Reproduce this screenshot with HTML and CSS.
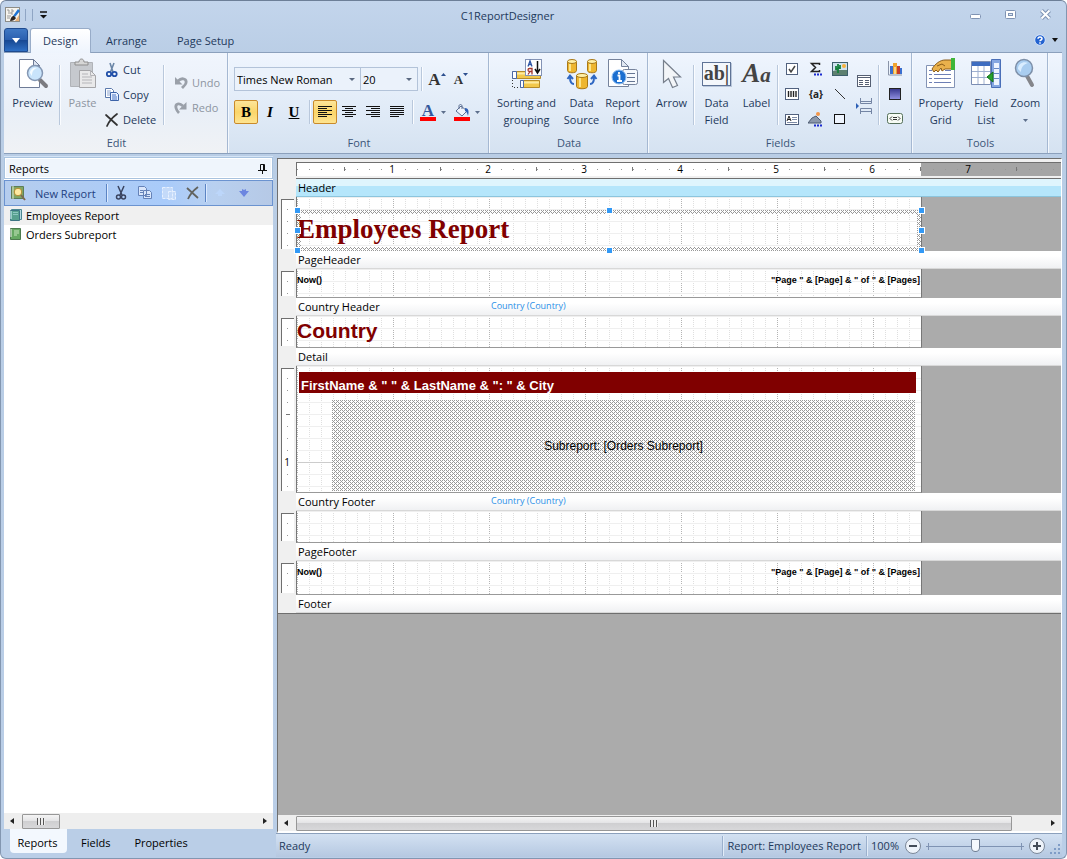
FILE: index.html
```html
<!DOCTYPE html>
<html lang="en">
<head>
  <meta charset="UTF-8" />
  <meta name="viewport" content="width=device-width, initial-scale=1.0" />
  <title>C1ReportDesigner</title>
  <link rel="stylesheet" href="styles.css">
</head>
<body>
<div class="window">
  <header class="titlebar">
    <div class="quick">
      <svg width="16" height="16" viewBox="0 0 16 16"><rect x="0.5" y="0.5" width="14" height="14" fill="#f6f4ee" stroke="#8d8d88"/><path d="M2 3h2v4M6 3h2v2H6v2h2M2 9h4M2 11h3" fill="none" stroke="#999"/><path d="M8 9l5-7 2 2-5 6z" fill="#1f74d4"/><path d="M5 14c1-4 2-5 4-5l2 2c-1 2-3 3-6 3z" fill="#2b2420"/><path d="M10 14l4-6v6z" fill="#e8b27a"/></svg>
      <i class="qsep"></i><i class="qsep"></i>
      <button class="plain" aria-label="Customize toolbar"><svg width="9" height="8" viewBox="0 0 9 8"><path d="M1 1h7" stroke="#111" stroke-width="1.4"/><path d="M1 4h7L4.500 7.500z" fill="#111"/></svg></button>
    </div>
    <h1>C1ReportDesigner</h1>
    <div class="winbtns">
      <button class="plain" aria-label="Minimize"><svg width="12" height="12" viewBox="0 0 12 12"><rect x="0.5" y="5.500" width="10" height="4" rx="1" fill="#fff" stroke="#7f93b3"/></svg></button>
      <button class="plain" aria-label="Maximize"><svg width="12" height="12" viewBox="0 0 12 12"><rect x="0.5" y="1.500" width="10" height="8" rx="1" fill="#fff" stroke="#7f93b3"/><rect x="3.500" y="4.500" width="4" height="2" fill="#dfe9f6" stroke="#7f93b3"/></svg></button>
      <button class="plain" aria-label="Close"><svg width="12" height="12" viewBox="0 0 12 12"><path d="M1.500 1.500l8 8M9.500 1.500l-8 8" stroke="#7f93b3" stroke-width="4"/><path d="M1.500 1.500l8 8M9.500 1.500l-8 8" stroke="#fff" stroke-width="2"/></svg></button>
    </div>
  </header>

  <nav class="tabs">
    <button class="appbtn" aria-label="Application menu"><svg width="8" height="5" viewBox="0 0 8 5"><path d="M0 0h8L4 5z" fill="#fff"/></svg></button>
    <button class="tab active">Design</button>
    <button class="tab">Arrange</button>
    <button class="tab">Page Setup</button>
    <button class="plain help" aria-label="Help"><svg width="12" height="12" viewBox="0 0 12 12"><circle cx="6" cy="6" r="5.300" fill="#2463d0" stroke="#d8e6fa"/><path d="M4 4.800c0-2.500 4-2.500 4 0 0 1.200-2 1.200-2 2.400M6 8.200v1.500" fill="none" stroke="#fff" stroke-width="1.500"/></svg></button>
    <button class="plain" aria-label="Help menu"><svg width="6" height="4" viewBox="0 0 6 4"><path d="M0 0h6L3 4z" fill="#111"/></svg></button>
  </nav>

  <section class="ribbon">
    <div class="group edit">
      <div class="tools">
        <button class="big w-preview"><svg width="32" height="32" viewBox="0 0 32 32"><path d="M2.500 1.500h14l6 6v22h-20z" fill="#fff" stroke="#6e7b96"/><path d="M16.500 1.500v6h6z" fill="#dde5f1" stroke="#6e7b96"/><path d="M23 22l6 6" stroke="#7b7b80" stroke-width="4" stroke-linecap="round"/><circle cx="18" cy="15" r="7.500" fill="#c9e4fb" stroke="#8497b3" stroke-width="1.500"/><path d="M13 15c0-4 4-6 7-5-3 1-5 3-5 8z" fill="#f4fbff"/></svg><span>Preview</span></button>
        <i class="sep"></i>
        <button class="big w-paste off"><svg width="32" height="32" viewBox="0 0 32 32"><path d="M3.500 4.500h22v24h-22z" fill="#c6c9ce" stroke="#b0b3b8"/><path d="M8 7V4h4c0-4 5-4 5 0h4v3z" fill="#d6d6d6" stroke="#8d8d8d"/><path d="M12.500 12.500h11l5 5v12h-16z" fill="#e9e9ea" stroke="#a5a5a8"/><path d="M23.500 12.500v5h5M15 16h6M15 19h10M15 22h10M15 25h10" fill="none" stroke="#b5b5b9"/></svg><span>Paste</span></button>
        <div class="stack">
          <button class="small"><svg width="16" height="16" viewBox="0 0 16 16"><path d="M6 1l3 9M10 1L6.500 10" stroke="#6c87a8" stroke-width="1.600"/><circle cx="5" cy="12" r="2.200" fill="none" stroke="#2250a8" stroke-width="1.800"/><circle cx="10.500" cy="12" r="2.200" fill="none" stroke="#2250a8" stroke-width="1.800"/></svg><span>Cut</span></button>
          <button class="small"><svg width="16" height="16" viewBox="0 0 16 16"><path d="M1.500 1.500h6l2 2v7h-8z" fill="#fff" stroke="#5b79ac"/><path d="M3 4h4M3 6h4M3 8h3" stroke="#8aa3cf"/><path d="M6.500 5.500h6l2 2v6h-8z" fill="#e8f0ff" stroke="#3c63a8"/><path d="M8 8h4M8 10h5M8 12h5" stroke="#4d76c4"/></svg><span>Copy</span></button>
          <button class="small"><svg width="16" height="16" viewBox="0 0 16 16"><path d="M2 3l11 10M13 2C9 5 5 9 3 14" fill="none" stroke="#333" stroke-width="1.700" stroke-linecap="round"/></svg><span>Delete</span></button>
        </div>
        <i class="sep"></i>
        <div class="stack two">
          <button class="small off"><svg width="16" height="16" viewBox="0 0 16 16"><path d="M5 6c4-4 9-2 8 2-.5 2-2 3-4 5" fill="none" stroke="#9aa0a9" stroke-width="2.800"/><path d="M2 2v7.500h7.500z" fill="#9aa0a9"/></svg><span>Undo</span></button>
          <button class="small off"><svg width="16" height="16" viewBox="0 0 16 16"><path d="M10 6C6 2 2 4 3 8c.5 2 1 3 3 5" fill="none" stroke="#9aa0a9" stroke-width="2.800"/><path d="M13.500 2v7.500H6z" fill="#9aa0a9"/></svg><span>Redo</span></button>
        </div>
      </div>
      <h2>Edit</h2>
    </div>

    <div class="group font">
      <div class="fonttools">
        <div class="row">
          <span class="combo name"><select aria-label="Font name"><option>Times New Roman</option></select></span>
          <span class="combo size"><select aria-label="Font size"><option>20</option></select></span>
          <i class="sep"></i>
          <button class="tool grow" aria-label="Grow font"><b>A</b><svg width="5" height="3" viewBox="0 0 5 3"><path d="M0 3h5L2.500 0z" fill="#2c4f8f"/></svg></button>
          <button class="tool grow shrink" aria-label="Shrink font"><b>A</b><svg width="5" height="3" viewBox="0 0 5 3"><path d="M0 0h5L2.500 3z" fill="#2c4f8f"/></svg></button>
        </div>
        <div class="row">
          <button class="tool fmt on"><b>B</b></button>
          <button class="tool fmt"><em>I</em></button>
          <button class="tool fmt"><u>U</u></button>
          <i class="sep"></i>
          <button class="tool on" aria-label="Align left"><svg width="14" height="12" viewBox="0 0 14 12"><path d="M0 .5h14M0 2.500h9M0 4.500h14M0 6.500h9M0 8.500h14M0 10.500h9" stroke="#111"/></svg></button>
          <button class="tool" aria-label="Align center"><svg width="14" height="12" viewBox="0 0 14 12"><path d="M0 .5h14M3 2.500h8M0 4.500h14M3 6.500h8M0 8.500h14M3 10.500h8" stroke="#111"/></svg></button>
          <button class="tool" aria-label="Align right"><svg width="14" height="12" viewBox="0 0 14 12"><path d="M0 .5h14M5 2.500h9M0 4.500h14M5 6.500h9M0 8.500h14M5 10.500h9" stroke="#111"/></svg></button>
          <button class="tool" aria-label="Justify"><svg width="14" height="12" viewBox="0 0 14 12"><path d="M0 .5h14M0 2.500h14M0 4.500h14M0 6.500h14M0 8.500h14M0 10.500h9" stroke="#111"/></svg></button>
          <i class="sep"></i>
          <button class="tool color" aria-label="Font color"><span class="swatch"><b>A</b></span><svg width="5" height="3" viewBox="0 0 5 3"><path d="M0 0h5L2.500 3z" fill="#5d6f8c"/></svg></button>
          <button class="tool color" aria-label="Fill color"><span class="swatch"><svg width="16" height="13" viewBox="0 0 16 13"><path d="M2 7l5-5 6 5-5 5z" fill="#eef3fb" stroke="#5c6f92"/><path d="M5 5V2c0-2 3-2 3 0v3" fill="none" stroke="#5c6f92"/><path d="M11 4c4 0 4 4 3 8-1-3-1-4-3-5z" fill="#2d5fb5"/></svg></span><svg width="5" height="3" viewBox="0 0 5 3"><path d="M0 0h5L2.500 3z" fill="#5d6f8c"/></svg></button>
        </div>
      </div>
      <h2>Font</h2>
    </div>

    <div class="group data">
      <div class="tools">
        <button class="big w-sort"><svg width="32" height="32" viewBox="0 0 32 32"><path d="M1.500 13.500h28v7h-28z" fill="#f2c84c" stroke="#b48a2a"/><path d="M1.500 13.500h4v7h-4z" fill="#fff" stroke="#4b68a6"/><path d="M9.500 22.500h19v7h-19z" fill="#f2c84c" stroke="#b48a2a"/><path d="M6 15.500h9M13 24.500h15" stroke="#fdeaa0" stroke-width="2"/><path d="M9.500 22.500h3v7h-3z" fill="#fff" stroke="#4b68a6"/><path d="M1.500 22v7.500H8" fill="none" stroke="#333" stroke-dasharray="1 2"/><rect x="14.500" y="1.500" width="16" height="16" fill="#fff" stroke="#8393b5"/><path d="M17 8.500l2-5.500 2 5.500M17.500 6.500h3" fill="none" stroke="#2d55a5" stroke-width="1.300"/><path d="M21 16.500v-6h-2.500c-2 0-2 3 0 3H21M19 13.500l-2 3" fill="none" stroke="#a3362c" stroke-width="1.300"/><path d="M26.500 3v11M24 11l2.500 4 2.500-4" fill="none" stroke="#111" stroke-width="1.500"/></svg><span>Sorting and<br>grouping</span></button>
        <button class="big w-mid"><svg width="32" height="32" viewBox="0 0 32 32"><g fill="#eeb62f" stroke="#a87817"><path d="M1.500 3.500v9c0 3 9 3 9 0v-9"/><ellipse cx="6" cy="3.500" rx="4.500" ry="2" fill="#fff0a8"/><path d="M21.500 3.500v9c0 3 9 3 9 0v-9"/><ellipse cx="26" cy="3.500" rx="4.500" ry="2" fill="#fff0a8"/><path d="M10.500 17.500v11c0 3 11 3 11 0v-11"/><ellipse cx="16" cy="17.500" rx="5.500" ry="2" fill="#fff0a8"/></g><path d="M4 6v7M24 6v7M14 20v9" stroke="#fbe48c" stroke-width="2"/><path d="M8 26c-3 0-4-2-4-7M1.500 21L4 17.500 7 21M24 26c3 0 4-2 4-7M25 21l3-3.500 2.500 3.500" fill="none" stroke="#2f67c2" stroke-width="2"/></svg><span>Data<br>Source</span></button>
        <button class="big w-mid"><svg width="32" height="32" viewBox="0 0 32 32"><path d="M1.500 1.500h13l7 7v20h-20z" fill="#fff" stroke="#76839c"/><path d="M14.500 1.500v7h7z" fill="#e1e8f2" stroke="#76839c"/><rect x="15.500" y="11.500" width="15" height="15" rx="2" fill="#f6f9fd" stroke="#76839c"/><path d="M20 15.500h8M20 19.500h8M20 23.500h8" stroke="#667693"/><circle cx="12" cy="19" r="7" fill="#1c6fd0" stroke="#8dbdf2"/><path d="M12 14v2M10.500 17.500H12.500V22.500M10 23h5" fill="none" stroke="#fff" stroke-width="1.800"/></svg><span>Report<br>Info</span></button>
      </div>
      <h2>Data</h2>
    </div>

    <div class="group fields">
      <div class="tools">
        <button class="big w-mid"><svg width="32" height="32" viewBox="0 0 32 32"><path d="M7.500 2.500v22l5-4 4 9 5-2-4-8.500h7z" fill="#f3f5f8" stroke="#777f8c" stroke-width="1.200"/></svg><span>Arrow</span></button>
        <i class="sep"></i>
        <button class="big w-mid"><span class="glyph"><b class="ab">ab|</b></span><span>Data<br>Field</span></button>
        <button class="big w-label"><span class="glyph"><b class="aa">A<small>a</small></b></span><span>Label</span></button>
        <i class="sep"></i>
        <div class="iconcol">
          <button class="tool" aria-label="Check box"><svg width="14" height="14" viewBox="0 0 14 14"><rect x="1.500" y="1.500" width="11" height="11" fill="#fff" stroke="#51617e"/><path d="M4 7l2 3 4-6" fill="none" stroke="#444" stroke-width="1.500"/></svg></button>
          <button class="tool" aria-label="Bar code"><svg width="16" height="14" viewBox="0 0 16 14"><rect x="1.500" y="1.500" width="13" height="11" fill="#fff" stroke="#51617e"/><path d="M4.500 4v6M7 4v6M9.500 4v6M12 4v6" stroke="#222" stroke-width="1.400"/></svg></button>
          <button class="tool" aria-label="Rich text"><svg width="16" height="14" viewBox="0 0 16 14"><rect x="1.500" y="2.500" width="13" height="10" fill="#fff" stroke="#51617e"/><path d="M3 9l2-5 2 5M4 7.500h2" fill="none" stroke="#222"/><path d="M8 5.500h5M8 7.500h5M3 10.500h10" stroke="#7d8ba6"/></svg></button>
        </div>
        <div class="iconcol">
          <button class="tool" aria-label="Calculated field"><svg width="14" height="14" viewBox="0 0 14 14"><path d="M10.500 3V1.500h-8l4 4-4 4h8V8" fill="none" stroke="#222" stroke-width="1.500"/><path d="M5 12.500h8" stroke="#1b2bd0" stroke-width="2" stroke-dasharray="2 1"/></svg></button>
          <button class="tool braces" aria-label="Formula field"><b>{a}</b></button>
          <button class="tool" aria-label="Bound picture"><svg width="16" height="16" viewBox="0 0 16 16"><path d="M0 12l4-5 4-2 5 5v2z" fill="#8c98ab" stroke="#4d5a70"/><circle cx="10" cy="3" r="2" fill="#f2964a"/><path d="M6 14.500h9" stroke="#1b2bd0" stroke-width="2" stroke-dasharray="2 1"/></svg></button>
        </div>
        <div class="iconcol">
          <button class="tool" aria-label="Picture"><svg width="16" height="16" viewBox="0 0 16 16"><rect x="0.5" y="1.500" width="15" height="13" fill="#cfe2ee" stroke="#3d5f6c"/><path d="M1 14v-4l4-1h10v5z" fill="#5d8070"/><path d="M6 12V3M4 5v3h2M8 4v3H6" stroke="#14803c" stroke-width="1.800" fill="none"/><circle cx="12" cy="5" r="2" fill="#f6b13c"/></svg></button>
          <button class="tool" aria-label="Line"><svg width="14" height="14" viewBox="0 0 14 14"><path d="M2 2l10 10" stroke="#333"/></svg></button>
          <button class="tool" aria-label="Rectangle"><svg width="14" height="14" viewBox="0 0 14 14"><rect x="1.500" y="2.500" width="10" height="9" fill="#eef4fd" stroke="#111"/></svg></button>
        </div>
        <div class="iconcol two">
          <button class="tool" aria-label="Subreport"><svg width="16" height="14" viewBox="0 0 16 14"><rect x="1.500" y="1.500" width="13" height="11" fill="#fff" stroke="#555f72"/><path d="M2 3.500h12M3 6.500h4M3 8.500h4M3 10.500h4M9 6.500h4M9 8.500h4M9 10.500h4" stroke="#555f72"/></svg></button>
          <button class="tool" aria-label="Page break"><svg width="18" height="16" viewBox="0 0 18 16"><path d="M5.500 0v5.500h11V0M5.500 16v-5.500h11V16M5 3.500h12M5 13.500h12" fill="none" stroke="#7485a4"/><path d="M1 5l3 3-3 3z" fill="#2c5fb5"/></svg></button>
        </div>
        <i class="sep chartsep"></i>
        <div class="iconcol">
          <button class="tool" aria-label="Chart"><svg width="16" height="16" viewBox="0 0 16 16"><path d="M1.500 0v14H15" stroke="#8a94a8" fill="none"/><rect x="3" y="5" width="3" height="8" fill="#3a6fd0"/><rect x="6" y="2" width="4" height="11" fill="#f0a32e"/><path d="M7 6h2v7H7z" fill="#f9d68a"/><rect x="10" y="5" width="3" height="8" fill="#c43c2c"/><rect x="13" y="7" width="2" height="6" fill="#3a6fd0"/></svg></button>
          <button class="tool" aria-label="Gradient"><span class="grad"></span></button>
          <button class="tool" aria-label="Markup"><svg width="16" height="14" viewBox="0 0 16 14"><rect x="0.5" y="1.500" width="15" height="10" rx="2" fill="#f6fbf4" stroke="#55705a"/><path d="M5 4.500l-2 2 2 2M6 5.500h4M6 7.500h4M11 4.500l2 2-2 2" fill="none" stroke="#333"/></svg></button>
        </div>
      </div>
      <h2>Fields</h2>
    </div>

    <div class="group views">
      <div class="tools">
        <button class="big w-prop"><svg width="32" height="32" viewBox="0 0 32 32"><path d="M1.500 7.500h28v22h-28z" fill="#fff" stroke="#8393b5"/><path d="M4 12.500h3M4 16.500h3M4 20.500h3M4 24.500h3M9 16.500h17M9 20.500h17M9 24.500h17M20 12.500h6" stroke="#6d7fb5"/><path d="M7 11c3-5 8-9 13-9h7v9h-7l-3 2-1-3-3 4-2-2-2 2z" fill="#e9b14c" stroke="#8b5c18"/><path d="M12 8l5-2 3 2" fill="none" stroke="#8b5c18"/><rect x="26" y="0" width="4" height="12" fill="#3eb539"/></svg><span>Property<br>Grid</span></button>
        <button class="big w-mid"><svg width="32" height="32" viewBox="0 0 32 32"><path d="M1.500 3.500h19v23h-19z" fill="#fff" stroke="#7b8db3"/><path d="M2 4h18v4H2z" fill="#3d6cc0"/><path d="M8 8v18M14 8v18M2 13.500h18M2 19.500h18" stroke="#9fb0d0"/><path d="M21.500 1.500h9v28h-9z" fill="#86a7e2" stroke="#4a6fb8"/><path d="M24 5h5v22h-5z" fill="#eef4ff"/><path d="M24 10.500h5M24 15.500h5M24 20.500h5" stroke="#6788c5"/><path d="M23 14v10l-6-5z" fill="#27a22b" stroke="#157018"/></svg><span>Field<br>List</span></button>
        <button class="big w-mid"><svg width="32" height="32" viewBox="0 0 32 32"><path d="M18 18l5 9" stroke="#84858a" stroke-width="4" stroke-linecap="round"/><circle cx="15" cy="10" r="8.500" fill="#a9cdf0" stroke="#7d8fa8" stroke-width="1.500"/><path d="M9 11c0-6 6-8 10-6-4 1-7 4-7 9z" fill="#d9edff"/></svg><span>Zoom</span><svg class="drop" width="5" height="4" viewBox="0 0 5 4"><path d="M0 0h5L2.500 3z" fill="#5d6f8c"/></svg></button>
      </div>
      <h2>Tools</h2>
    </div>
  </section>

  <div class="workspace">
    <aside class="side">
      <div class="panelhead"><span>Reports</span>
        <button class="plain" aria-label="Pin"><svg width="9" height="10" viewBox="0 0 9 10"><path d="M2.500 6V.5h4V6M0 6.500h9M4.500 7v3M5.500 1v5" fill="none" stroke="#111"/></svg></button>
      </div>
      <div class="paneltools">
        <button class="new"><svg width="17" height="16" viewBox="0 0 17 16"><path d="M1.500 1.500h12v12h-12z" fill="#7fa765" stroke="#5e7d56"/><path d="M3 1v13" stroke="#dfe8d4"/><circle cx="8" cy="7" r="3.800" fill="#ffeaa0" stroke="#b08a30"/><path d="M11 10l4 5" stroke="#7d6a50" stroke-width="2"/></svg><span>New Report</span></button>
        <i class="tsep"></i>
        <button class="tool" aria-label="Cut report"><svg width="16" height="16" viewBox="0 0 16 16"><path d="M5 1l4 9M11 1L7 10" stroke="#39435f" stroke-width="1.500"/><circle cx="5.500" cy="12" r="2" fill="none" stroke="#39435f" stroke-width="1.500"/><circle cx="10.500" cy="12" r="2" fill="none" stroke="#39435f" stroke-width="1.500"/></svg></button>
        <button class="tool" aria-label="Copy report"><svg width="16" height="16" viewBox="0 0 16 16"><path d="M1.500 1.500h6l2 2v7h-8zM6.500 5.500h6l2 2v6h-8z" fill="#d9e6fb" stroke="#6582b8"/><path d="M8 9.500h5M8 11.500h5M3 5.500h3M3 7.500h3" stroke="#6582b8"/></svg></button>
        <button class="tool" aria-label="Paste report"><svg width="16" height="16" viewBox="0 0 16 16"><path d="M1.500 2.500h10v11h-10zM7.500 6.500h7v8h-7z" fill="#c4daf9" stroke="#e6f0ff" stroke-dasharray="3 1"/></svg></button>
        <button class="tool" aria-label="Delete report"><svg width="16" height="16" viewBox="0 0 16 16"><path d="M2 3l11 10M13 2C9 5 5 9 3 14" fill="none" stroke="#62635f" stroke-width="1.800"/></svg></button>
        <i class="tsep"></i>
        <button class="tool" aria-label="Move up"><svg width="12" height="10" viewBox="0 0 12 10"><path d="M6 1l5 5H8v2H4V6H1z" fill="#bcd6fa"/></svg></button>
        <button class="tool" aria-label="Move down"><svg width="12" height="10" viewBox="0 0 12 10"><path d="M4 1l2 1 2-1v2h3L6 9 1 3h3z" fill="#6c86e0"/></svg></button>
      </div>
      <ul class="reports">
        <li class="selected"><button><svg width="13" height="13" viewBox="0 0 13 13"><path d="M2.500.5h10v10h-10z" fill="#b6d9e0" stroke="#4b8793"/><path d="M1.500 1.500h9v10h-9z" fill="#57a08f" stroke="#3c7483"/><path d="M4 3.500h5M4 5.500h5" stroke="#8cc6c0"/><path d="M1 3h2M1 5h2M1 7h2M1 9h2" stroke="#dff"/></svg>Employees Report</button></li>
        <li><button><svg width="13" height="13" viewBox="0 0 13 13"><path d="M1.500.5h10v11h-10z" fill="#66a963" stroke="#4d7a4e"/><path d="M5 3h5M5 5h5M5 7h3" stroke="#c8e6c0"/><path d="M1 2h2M1 4h2M1 6h2M1 8h2" stroke="#eee"/></svg>Orders Subreport</button></li>
      </ul>
      <div class="hscroll"><i class="arr back"></i><div class="thumb short"></div><i class="fill"></i><i class="arr forward"></i></div>
      <div class="paneltabs">
        <button class="active">Reports</button>
        <button>Fields</button>
        <button>Properties</button>
      </div>
    </aside>

    <div class="content">
      <main class="designer">
        <div class="ruler"><span>1</span><span>2</span><span>3</span><span>4</span><span>5</span><span>6</span><span>7</span></div>
        <div class="sections">
          <section>
            <h3 class="band current">Header</h3>
            <div class="body h-header"><div class="gutter"><div class="vruler"></div></div>
              <div class="page">
                <div class="field title">Employees Report<i class="grip nw"></i><i class="grip n"></i><i class="grip ne"></i><i class="grip w"></i><i class="grip e"></i><i class="grip sw"></i><i class="grip s"></i><i class="grip se"></i></div>
              </div></div>
          </section>
          <section>
            <h3 class="band">PageHeader</h3>
            <div class="body h-pagehead"><div class="gutter"><div class="vruler"></div></div>
              <div class="page"><div class="pageinfo"><span>Now()</span><span>"Page " &amp; [Page] &amp; " of " &amp; [Pages]</span></div></div></div>
          </section>
          <section>
            <h3 class="band">Country Header<small>Country (Country)</small></h3>
            <div class="body h-group"><div class="gutter"><div class="vruler"></div></div>
              <div class="page"><div class="country">Country</div></div></div>
          </section>
          <section>
            <h3 class="band">Detail</h3>
            <div class="body h-detail"><div class="gutter"><div class="vruler"><span>1</span></div></div>
              <div class="page">
                <div class="namebar">FirstName &amp; " " &amp; LastName &amp; ": " &amp; City</div>
                <div class="subreport">Subreport: [Orders Subreport]</div>
              </div></div>
          </section>
          <section>
            <h3 class="band">Country Footer<small>Country (Country)</small></h3>
            <div class="body h-group"><div class="gutter"><div class="vruler"></div></div><div class="page"></div></div>
          </section>
          <section>
            <h3 class="band">PageFooter</h3>
            <div class="body h-pagefoot"><div class="gutter"><div class="vruler"></div></div>
              <div class="page"><div class="pageinfo"><span>Now()</span><span>"Page " &amp; [Page] &amp; " of " &amp; [Pages]</span></div></div></div>
          </section>
          <section><h3 class="band">Footer</h3></section>
        </div>
        <div class="hscroll"><i class="arr back"></i><div class="thumb long"></div><i class="arr forward"></i></div>
      </main>
      <footer class="status">
        <span class="ready">Ready</span>
        <span class="cell">Report: Employees Report</span>
        <label class="cell" for="zoom">100%</label>
        <button class="plain" aria-label="Zoom out"><svg width="18" height="18" viewBox="0 0 18 18"><circle cx="9" cy="9" r="7.500" fill="#eef3fa" stroke="#7b8798"/><path d="M5 9h8" stroke="#444c58" stroke-width="2"/></svg></button>
        <input type="range" id="zoom" min="0" max="200" value="100">
        <button class="plain" aria-label="Zoom in"><svg width="18" height="18" viewBox="0 0 18 18"><circle cx="9" cy="9" r="7.500" fill="#eef3fa" stroke="#7b8798"/><path d="M5 9h8M9 5v8" stroke="#444c58" stroke-width="2"/></svg></button>
        <svg class="sizegrip" width="12" height="12" viewBox="0 0 12 12"><path d="M9 1h2v2H9zM5 5h2v2H5zM9 5h2v2H9zM1 9h2v2H1zM5 9h2v2H5zM9 9h2v2H9z" fill="#7f9cc6"/></svg>
      </footer>
    </div>
  </div>
</div>
</body>
</html>
```
FILE: styles.css
```css
* { box-sizing: border-box; }
body { margin: 0; background: #fff; font-family: "Open Sans", "Noto Sans", sans-serif; font-size: 11px; line-height: 17px; color: #1e395b; }
button { font: inherit; color: inherit; background: none; border: 0; padding: 0; margin: 0; display: flex; align-items: center; justify-content: center; white-space: nowrap; }
h1, h2, h3 { margin: 0; font-size: 11px; font-weight: normal; }
svg { display: block; flex: none; }
.window { height: 100vh; display: flex; flex-direction: column; padding: 0 4px 1px 3px; border: 1px solid #8396b0; border-top-color: #6d7f98; border-radius: 6px; background: linear-gradient(#c3d5ec, #b9cde5 60px, #bacee7); overflow: hidden; }

/* title bar and tabs */
.titlebar { display: flex; height: 27px; flex: none; align-items: center; }
.titlebar h1 { flex: 1; text-align: center; padding: 2px 5px 0 0; }
.quick { display: flex; align-items: center; gap: 6px; width: 46px; padding-left: 1px; }
.quick svg { margin-right: -2px; }
.qsep { width: 1px; height: 12px; background: #8fa5c4; flex: none; }
.winbtns { display: flex; gap: 23px; width: 92px; }
.tabs { display: flex; height: 25px; flex: none; align-items: stretch; padding-right: 4px; border-bottom: 1px solid #8ba0bc; }
.appbtn { width: 24px; margin-right: 2px; border: 1px solid #1f4b8f; border-radius: 3px 3px 0 0; background: linear-gradient(#3f78c4, #2a5faf 50%, #174791 50%, #2e6fc4); }
.tab { padding: 1px 15px 0; }
.tab.active { width: 61px; margin-bottom: -1px; padding: 0 0 1px; border: 1px solid #98acc8; border-bottom: 0; border-radius: 3px 3px 0 0; background: linear-gradient(#fff, #eef4fd); }
.help { margin-left: auto; margin-right: 6px; }

/* ribbon */
.ribbon { display: flex; height: 101px; flex: none; background: linear-gradient(#eff5fe, #e2ecf8 50%, #d5e2f1); border-bottom: 1px solid #8ba0bc; }
.group { display: flex; flex-direction: column; border-right: 1px solid #a5b8d2; box-shadow: 1px 0 #f4f8fd; flex: none; }
.group h2 { text-align: center; height: 19px; line-height: 17px; color: #3b5578; padding-left: 2px; }
.tools { display: flex; flex: 1; padding: 4px 2px 0 3px; }
.edit { width: 224px; background: linear-gradient(#f0f5fd, #e9eff7 60%, #f0f2f5); }
.font { width: 261px; }
.data { width: 159px; }
.fields { width: 264px; }
.views { width: 136px; }
.big { flex-direction: column; justify-content: flex-start; width: 41px; padding-top: 1px; text-align: center; }
.big > svg, .glyph { margin-bottom: 4px; }
.w-preview { width: 51px; }
.w-sort { width: 69px; }
.w-label { width: 39px; }
.w-prop { width: 54px; }
.big .drop { margin: 8px 0 0; }
.off { color: #8d95a1; }
.sep { width: 2px; height: 60px; margin: 8px 1px 0; flex: none; background: linear-gradient(90deg, #b9c8dc 50%, #fafcff 50%); }
.chartsep { margin: 8px 3px 0 2px; }
.stack { display: flex; flex-direction: column; width: 59px; padding-left: 1px; }
.stack.two { padding: 13px 0 0 7px; width: 56px; }
.small { height: 25px; justify-content: flex-start; gap: 3px; }
.glyph { height: 32px; display: flex; align-items: center; font-family: "Liberation Serif", serif; color: #444; }
.ab { border: 1px solid #5f7396; box-shadow: 1px 1px #b9c6da; background: #f4f7fb; font-size: 20px; line-height: 20px; padding: 0 1px 2px; }
.aa { font-size: 27px; font-style: italic; }
.aa small { font-size: 21px; }
.tool { width: 24px; height: 24px; border: 1px solid transparent; border-radius: 2px; flex: none; }
.on { border-color: #c98a2b; background: linear-gradient(#fde59a, #fbd56a 50%, #fee490); color: #000; }
.iconcol { display: flex; flex-direction: column; width: 24px; gap: 1px; }
.iconcol.two { padding-top: 12px; }
.braces { font-size: 10px; color: #222; }
.grad { width: 12px; height: 12px; border: 1px solid #222; background: linear-gradient(#3a3a90, #8f8fe0); }

.fonttools { flex: 1; padding: 14px 0 0 6px; display: flex; flex-direction: column; gap: 9px; }
.row { display: flex; height: 24px; align-items: center; }
.row .sep { height: 24px; margin: 0 2px 0 3px; }
.combo { position: relative; height: 24px; border: 1px solid #b3c3d9; background: #ebf2fb; }
.combo::after { content: ""; position: absolute; right: 5px; top: 10px; border: 3px solid transparent; border-top: 3px solid #5a6880; border-bottom: 0; pointer-events: none; }
.combo select { appearance: none; width: 100%; height: 22px; border: 0; background: none; font: inherit; color: #000; padding: 0 2px; }
.combo.name { width: 127px; }
.combo.size { width: 58px; margin-left: -1px; }
.grow { font-family: "Liberation Serif", serif; font-size: 17px; color: #333; }
.grow svg { margin-bottom: 10px; }
.shrink { font-size: 13px; }
.fmt { font-family: "Liberation Serif", serif; font-size: 15px; font-weight: bold; color: #000; }
.color { width: 34px; gap: 5px; }
.swatch { display: flex; justify-content: center; width: 16px; height: 17px; border-bottom: 4px solid #f00; font-family: "Liberation Serif", serif; font-size: 17px; line-height: 13px; color: #34589c; }

/* side panel */
.workspace { display: flex; flex: 1; min-height: 0; padding-top: 3px; }
.side { width: 269px; margin-right: 3px; flex: none; display: flex; flex-direction: column; background: #fff; color: #000; box-shadow: 0 -1px #d5e4f5; }
.panelhead { display: flex; justify-content: space-between; align-items: center; height: 22px; padding: 1px 5px 0 4px; border: 1px solid #a9c3df; box-shadow: inset 0 0 0 1px #fff; background: #eff5fc; }
.paneltools { display: flex; align-items: center; height: 26px; margin-top: 1px; padding: 0 5px; border: 1px solid #6b93d0; background: linear-gradient(90deg, #b5cdee 0, #a9cbfa 60%, #b8d0f0 78%, #b6c9e6); color: #1e3f80; }
.new { gap: 8px; width: 96px; justify-content: flex-start; }
.tsep { width: 2px; height: 18px; background: linear-gradient(90deg, #5b84c4 50%, #dceaff 50%); }
.tsep + .tool { margin-left: 1px; }
.reports { list-style: none; margin: 0; padding: 0; flex: 1; background: #fff; }
.reports button { width: 100%; height: 19px; justify-content: flex-start; gap: 4px; padding-left: 5px; }
.reports .selected { background: #f0f0f0; }
.hscroll { display: flex; align-items: center; height: 16px; flex: none; background: #eee; padding: 0 6px; }
.arr { border: 3px solid transparent; width: 4px; flex: none; }
.arr.back { border-right: 4px solid #222; border-left: 0; }
.arr.forward { border-left: 4px solid #222; border-right: 0; }
.thumb { height: 15px; border: 1px solid #979797; border-radius: 1px; background: linear-gradient(#f4f4f4, #e4e4e6 45%, #cfcfd1 50%, #d8d8da); display: flex; justify-content: center; align-items: center; }
.thumb::after { content: ""; width: 8px; height: 7px; background: repeating-linear-gradient(90deg, #555 0 1px, #eee 1px 3px); }
.short { width: 38px; margin-left: 8px; }
.long { flex: 1; margin: 0 39px 0 8px; }
.fill { flex: 1; }
.paneltabs { display: flex; height: 28px; flex: none; background: #bacee7; padding: 0 6px 4px; }
.paneltabs button { height: 24px; padding: 3px 12px 0; }
.paneltabs .active { width: 57px; margin-right: 2px; padding: 3px 2px 0 0; border-radius: 0 0 4px 4px; background: #f3f8fe; }

/* designer */
.content { flex: 1; min-width: 0; display: flex; flex-direction: column; }
.designer { flex: 1; min-height: 0; display: flex; flex-direction: column; margin: 1px 0 0 1px; background: #ababab; border: 1px solid #6f6f6f; border-right: 1px solid #fff; border-bottom: 2px solid #fff; color: #000; }
.ruler { display: flex; height: 20px; flex: none; padding: 4px 0 0 66px; overflow: hidden; background: #f0f0f0; position: relative; }
.ruler::before { content: ""; position: absolute; left: 18px; right: 0; top: 3px; height: 13px; border: 1px solid #6f6f6f; border-width: 1px 0 0 1px; background:
  linear-gradient(90deg, #777 1px, transparent 1px) 47px 4px / 96px 4px repeat-x,
  linear-gradient(90deg, #999 1px, transparent 1px) 0 6px / 12px 1px repeat-x,
  linear-gradient(90deg, #fff 624px, #a5a5a5 624px); }
.ruler span { position: relative; width: 96px; flex: none; text-align: center; font-size: 10px; line-height: 12px; background: linear-gradient(#fff, #fff) center / 10px 9px no-repeat; }
.ruler span:last-child { background-image: linear-gradient(#a5a5a5, #a5a5a5); }
.sections { border-bottom: 1px solid #6f6f6f; background: #f0f0f0; }
.band { position: relative; height: 18px; margin-left: 18px; padding-left: 2px; line-height: 18px; background: linear-gradient(#fff 30%, #f0f1f3); border-bottom: 1px solid #d8d8d8; }
.band.current { border-bottom-color: #8cc5dd; background: linear-gradient(#dff5fd 40%, #b5e6fb 40%); box-shadow: 0 -1px #6f6f6f; }
.band small { position: absolute; left: 195px; font-size: 9px; line-height: 15px; color: #2a90e8; }
.body { display: flex; background: linear-gradient(90deg, #f0f0f0 18px, #ababab 18px); }
.gutter { width: 18px; flex: none; padding: 2px 2px 2px 3px; }
.vruler { height: 100%; border: 1px solid #6f6f6f; border-width: 1px 0 0 1px; overflow: hidden; background: linear-gradient(#777, #777) 4px 45px / 4px 1px no-repeat, linear-gradient(#999 1px, transparent 1px) 5px 9px / 1px 12px repeat-y, #fff; }
.h-header .vruler { background: linear-gradient(#999 1px, transparent 1px) 5px 9px / 1px 12px repeat-y, #fff; }
.vruler span { display: block; width: 8px; height: 10px; margin: 88px 0 0 1px; text-align: center; font-size: 10px; line-height: 10px; background: #fff; }
.page { position: relative; width: 626px; flex: none; border: 1px solid #777; border-top: 0; border-bottom-color: #999; background:
  linear-gradient(#ccc, #ccc) 0 96px / 100% 1px no-repeat,
  linear-gradient(#efefef 1px, transparent 1px) 0 0 / 100% 12px,
  linear-gradient(transparent 1px, #fff 1px) 0 0 / 100% 2px,
  linear-gradient(90deg, #b4b4b4 1px, transparent 1px) 0 0 / 96px 100%,
  linear-gradient(90deg, #dfdfdf 1px, transparent 1px) 0 0 / 12px 100%, #fff; }
.h-header { height: 54px; }
.h-pagehead { height: 29px; }
.h-group { height: 32px; }
.h-detail { height: 127px; }
.h-pagefoot { height: 34px; }

.field.title { position: absolute; left: 0; right: 0; top: 13px; height: 41px; font: bold 27px/39px "Liberation Serif", serif; color: #800000; }
.field.title::before, .subreport { background:
  conic-gradient(from 270deg at 1px 1px, #999 90deg, transparent 0) 0 0 / 2px 2px,
  conic-gradient(from 270deg at 1px 1px, #999 90deg, transparent 0) 1px 1px / 4px 4px,
  conic-gradient(from 270deg at 1px 1px, #999 90deg, #fff 0) 3px 3px / 4px 4px; }
.field.title::before { content: ""; position: absolute; inset: 0; z-index: -1; clip-path: polygon(evenodd, 0 0, 100% 0, 100% 100%, 0 100%, 0 0, 4px 4px, 4px calc(100% - 4px), calc(100% - 4px) calc(100% - 4px), calc(100% - 4px) 4px, 4px 4px); }
.h-header .page { z-index: 1; }
.grip { position: absolute; width: 7px; height: 7px; border: 1px solid #fff; background: #3399f5; z-index: 1; }
.nw, .n, .ne { top: -3px; }
.w, .e { top: 17px; }
.sw, .s, .se { bottom: -3px; }
.nw, .w, .sw { left: -3px; }
.n, .s { left: 309px; }
.ne, .e, .se { right: -4px; }
.pageinfo { display: flex; justify-content: space-between; padding: 3px 1px 0 0; font: bold 9px/16px "Liberation Sans", sans-serif; }
.country { font: bold 21px/30px "Liberation Sans", sans-serif; color: #800000; }
.namebar { margin: 6px 5px 0 2px; height: 21px; padding: 4px 2px 0; background: #800000; color: #fff; font: bold 13px/20px "Liberation Sans", sans-serif; }
.subreport { margin: 7px 6px 0 35px; height: 91px; line-height: 93px; text-align: center; font-size: 12px; font-family: "Liberation Sans", sans-serif; }
.designer > .hscroll { margin-top: auto; }

/* status bar */
.status { display: flex; align-items: center; height: 24px; flex: none; padding: 0 1px 0 3px; border-top: 1px solid #8ba0bc; background: linear-gradient(#d3e1f2, #b5c8e1); }
.ready { flex: 1; }
.cell { border-left: 1px solid #9bb0cd; box-shadow: inset 1px 0 #e2ecf8; padding: 0 5px 0 4px; line-height: 20px; }
.status input { appearance: none; width: 98px; height: 18px; margin: 0 4px; background: linear-gradient(#7f93b3, #7f93b3) 0 9px / 100% 1px no-repeat, linear-gradient(#7f93b3, #7f93b3) 2px 6px / 1px 7px no-repeat, linear-gradient(#7f93b3, #7f93b3) 95px 6px / 1px 7px no-repeat; }
.status input::-webkit-slider-thumb { appearance: none; width: 9px; height: 13px; background: #f4f8fd; border: 1px solid #6f7d92; border-radius: 1px 1px 5px 5px; }
.sizegrip { margin: 6px 0 0 3px; }
```
